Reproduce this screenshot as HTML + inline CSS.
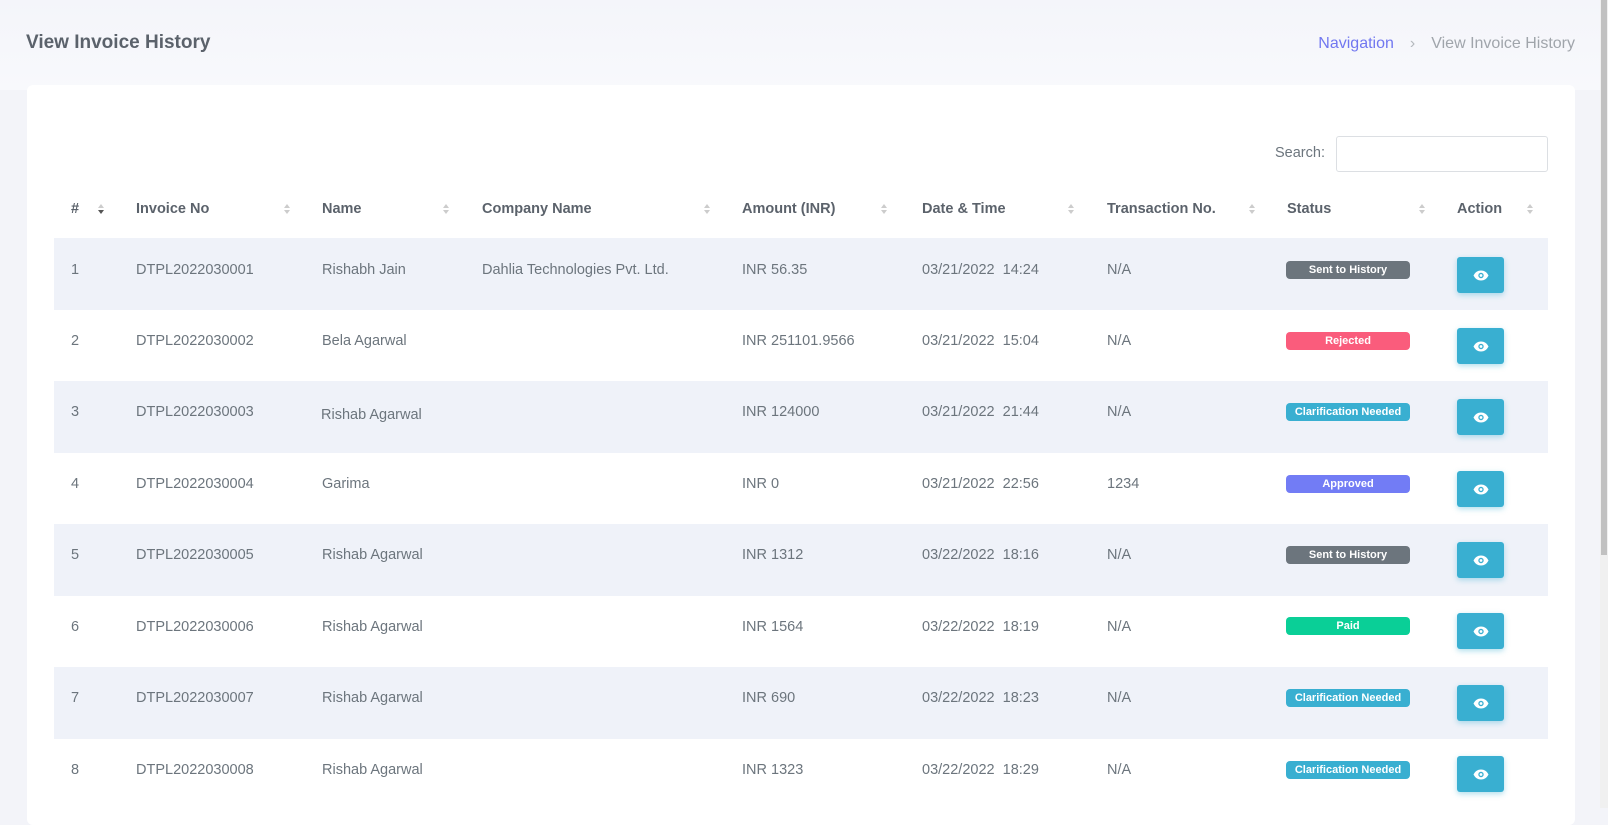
<!DOCTYPE html>
<html><head><meta charset="utf-8"><style>
*{box-sizing:border-box;margin:0;padding:0}
body{width:1608px;height:808px;overflow:hidden;background:#f3f4f9;font-family:"Liberation Sans",sans-serif;color:#6c757d;position:relative}
.top{position:absolute;left:0;top:0;width:1600px;height:90px;background:linear-gradient(#f4f5fa,#f8f9fc)}
h1{position:absolute;left:26px;top:32px;font-size:19px;font-weight:bold;color:#5b626b}
.bc{position:absolute;right:33px;top:35px;font-size:16px;color:#a0a5ab;white-space:nowrap}
.bc a{color:#7177f0;text-decoration:none}
.bc .sep{margin:0 16px 0 16px;color:#b4b8bd}
.card{position:absolute;left:27px;top:85px;width:1548px;height:740px;background:#fff;border-radius:6px}
.search{position:absolute;left:1275px;top:145px;font-size:14.5px;color:#6c757d}
.inp{position:absolute;left:1336px;top:136px;width:212px;height:36px;border:1px solid #dcdfe3;border-radius:3px;background:#fff}
.th{position:absolute;top:201px;font-size:14.5px;font-weight:bold;color:#5b626b}
.sort{position:absolute;top:203px;width:8px;height:12px}
.row{position:absolute;left:54px;width:1494px;height:71.5px}
.row.alt{background:#eff2f9}
.td{position:absolute;font-size:14.5px;color:#6c757d;margin-top:2px}
.badge{position:absolute;left:1286px;width:124px;height:18px;border-radius:4px;color:#fff;font-size:11px;font-weight:bold;text-align:center;line-height:18px}
.btn{position:absolute;left:1457px;width:47px;height:36px;background:#39afd1;border-radius:3px;box-shadow:0 2px 6px rgba(57,175,209,.4);display:flex;align-items:center;justify-content:center}
.sb{position:absolute;left:1600px;top:0;width:8px;height:808px;background:#f0f0f0}
.sb div{position:absolute;left:1px;top:0;width:6px;height:555px;background:#c1c1c1}
</style></head><body>
<div class="top"></div>
<h1>View Invoice History</h1>
<div class="bc"><a>Navigation</a><span class="sep">&#8250;</span>View Invoice History</div>
<div class="card"></div>
<div class="search">Search:</div><div class="inp"></div>
<div class="th" style="left:71px">#</div>
<div class="th" style="left:136px">Invoice No</div>
<div class="th" style="left:322px">Name</div>
<div class="th" style="left:482px">Company Name</div>
<div class="th" style="left:742px">Amount (INR)</div>
<div class="th" style="left:922px">Date &amp; Time</div>
<div class="th" style="left:1107px">Transaction No.</div>
<div class="th" style="left:1287px">Status</div>
<div class="th" style="left:1457px">Action</div>
<svg class="sort" style="left:97px" viewBox="0 0 8 12"><path d="M4 1L7 5H1Z" fill="#ccc"/><path d="M4 11L7 7H1Z" fill="#555"/></svg>
<svg class="sort" style="left:283px" viewBox="0 0 8 12"><path d="M4 1L7 5H1Z M4 11L7 7H1Z" fill="#ccc"/></svg>
<svg class="sort" style="left:442px" viewBox="0 0 8 12"><path d="M4 1L7 5H1Z M4 11L7 7H1Z" fill="#ccc"/></svg>
<svg class="sort" style="left:703px" viewBox="0 0 8 12"><path d="M4 1L7 5H1Z M4 11L7 7H1Z" fill="#ccc"/></svg>
<svg class="sort" style="left:880px" viewBox="0 0 8 12"><path d="M4 1L7 5H1Z M4 11L7 7H1Z" fill="#ccc"/></svg>
<svg class="sort" style="left:1067px" viewBox="0 0 8 12"><path d="M4 1L7 5H1Z M4 11L7 7H1Z" fill="#ccc"/></svg>
<svg class="sort" style="left:1248px" viewBox="0 0 8 12"><path d="M4 1L7 5H1Z M4 11L7 7H1Z" fill="#ccc"/></svg>
<svg class="sort" style="left:1418px" viewBox="0 0 8 12"><path d="M4 1L7 5H1Z M4 11L7 7H1Z" fill="#ccc"/></svg>
<svg class="sort" style="left:1526px" viewBox="0 0 8 12"><path d="M4 1L7 5H1Z M4 11L7 7H1Z" fill="#ccc"/></svg>

<div class="row alt" style="top:238px"></div>
<div class="row" style="top:309.5px"></div>
<div class="row alt" style="top:381px"></div>
<div class="row" style="top:452.5px"></div>
<div class="row alt" style="top:524px"></div>
<div class="row" style="top:595.5px"></div>
<div class="row alt" style="top:667px"></div>
<div class="row" style="top:738.5px"></div>

<div class="td" style="left:71px;top:260px">1</div><div class="td" style="left:136px;top:260px">DTPL2022030001</div><div class="td" style="left:322px;top:260px">Rishabh Jain</div><div class="td" style="left:482px;top:260px">Dahlia Technologies Pvt. Ltd.</div><div class="td" style="left:742px;top:260px">INR 56.35</div><div class="td" style="left:922px;top:260px">03/21/2022&nbsp; 14:24</div><div class="td" style="left:1107px;top:260px">N/A</div>
<div class="badge" style="top:261px;background:#6c757d">Sent to History</div>

<div class="td" style="left:71px;top:331px">2</div><div class="td" style="left:136px;top:331px">DTPL2022030002</div><div class="td" style="left:322px;top:331px">Bela Agarwal</div><div class="td" style="left:742px;top:331px">INR 251101.9566</div><div class="td" style="left:922px;top:331px">03/21/2022&nbsp; 15:04</div><div class="td" style="left:1107px;top:331px">N/A</div>
<div class="badge" style="top:332px;background:#fa5c7c">Rejected</div>

<div class="td" style="left:71px;top:402px">3</div><div class="td" style="left:136px;top:402px">DTPL2022030003</div><div class="td" style="left:321px;top:405px">Rishab Agarwal</div><div class="td" style="left:742px;top:402px">INR 124000</div><div class="td" style="left:922px;top:402px">03/21/2022&nbsp; 21:44</div><div class="td" style="left:1107px;top:402px">N/A</div>
<div class="badge" style="top:403px;background:#39afd1">Clarification Needed</div>

<div class="td" style="left:71px;top:474px">4</div><div class="td" style="left:136px;top:474px">DTPL2022030004</div><div class="td" style="left:322px;top:474px">Garima</div><div class="td" style="left:742px;top:474px">INR 0</div><div class="td" style="left:922px;top:474px">03/21/2022&nbsp; 22:56</div><div class="td" style="left:1107px;top:474px">1234</div>
<div class="badge" style="top:475px;background:#727cf5">Approved</div>

<div class="td" style="left:71px;top:545px">5</div><div class="td" style="left:136px;top:545px">DTPL2022030005</div><div class="td" style="left:322px;top:545px">Rishab Agarwal</div><div class="td" style="left:742px;top:545px">INR 1312</div><div class="td" style="left:922px;top:545px">03/22/2022&nbsp; 18:16</div><div class="td" style="left:1107px;top:545px">N/A</div>
<div class="badge" style="top:546px;background:#6c757d">Sent to History</div>

<div class="td" style="left:71px;top:617px">6</div><div class="td" style="left:136px;top:617px">DTPL2022030006</div><div class="td" style="left:322px;top:617px">Rishab Agarwal</div><div class="td" style="left:742px;top:617px">INR 1564</div><div class="td" style="left:922px;top:617px">03/22/2022&nbsp; 18:19</div><div class="td" style="left:1107px;top:617px">N/A</div>
<div class="badge" style="top:617px;background:#0acf97">Paid</div>

<div class="td" style="left:71px;top:688px">7</div><div class="td" style="left:136px;top:688px">DTPL2022030007</div><div class="td" style="left:322px;top:688px">Rishab Agarwal</div><div class="td" style="left:742px;top:688px">INR 690</div><div class="td" style="left:922px;top:688px">03/22/2022&nbsp; 18:23</div><div class="td" style="left:1107px;top:688px">N/A</div>
<div class="badge" style="top:689px;background:#39afd1">Clarification Needed</div>

<div class="td" style="left:71px;top:760px">8</div><div class="td" style="left:136px;top:760px">DTPL2022030008</div><div class="td" style="left:322px;top:760px">Rishab Agarwal</div><div class="td" style="left:742px;top:760px">INR 1323</div><div class="td" style="left:922px;top:760px">03/22/2022&nbsp; 18:29</div><div class="td" style="left:1107px;top:760px">N/A</div>
<div class="badge" style="top:761px;background:#39afd1">Clarification Needed</div>

<div class="btn" style="top:257px"><svg width="16" height="11" viewBox="0 0 16 11"><path d="M0.5 5.5C2.5 1.8 5 0.5 8 0.5s5.5 1.3 7.5 5c-2 3.7-4.5 5-7.5 5S2.5 9.2 0.5 5.5Z" fill="#fff"/><circle cx="8" cy="5.5" r="2.7" fill="#39afd1"/><circle cx="8" cy="5.5" r="1.4" fill="#fff"/></svg></div>
<div class="btn" style="top:328px"><svg width="16" height="11" viewBox="0 0 16 11"><path d="M0.5 5.5C2.5 1.8 5 0.5 8 0.5s5.5 1.3 7.5 5c-2 3.7-4.5 5-7.5 5S2.5 9.2 0.5 5.5Z" fill="#fff"/><circle cx="8" cy="5.5" r="2.7" fill="#39afd1"/><circle cx="8" cy="5.5" r="1.4" fill="#fff"/></svg></div>
<div class="btn" style="top:399px"><svg width="16" height="11" viewBox="0 0 16 11"><path d="M0.5 5.5C2.5 1.8 5 0.5 8 0.5s5.5 1.3 7.5 5c-2 3.7-4.5 5-7.5 5S2.5 9.2 0.5 5.5Z" fill="#fff"/><circle cx="8" cy="5.5" r="2.7" fill="#39afd1"/><circle cx="8" cy="5.5" r="1.4" fill="#fff"/></svg></div>
<div class="btn" style="top:471px"><svg width="16" height="11" viewBox="0 0 16 11"><path d="M0.5 5.5C2.5 1.8 5 0.5 8 0.5s5.5 1.3 7.5 5c-2 3.7-4.5 5-7.5 5S2.5 9.2 0.5 5.5Z" fill="#fff"/><circle cx="8" cy="5.5" r="2.7" fill="#39afd1"/><circle cx="8" cy="5.5" r="1.4" fill="#fff"/></svg></div>
<div class="btn" style="top:542px"><svg width="16" height="11" viewBox="0 0 16 11"><path d="M0.5 5.5C2.5 1.8 5 0.5 8 0.5s5.5 1.3 7.5 5c-2 3.7-4.5 5-7.5 5S2.5 9.2 0.5 5.5Z" fill="#fff"/><circle cx="8" cy="5.5" r="2.7" fill="#39afd1"/><circle cx="8" cy="5.5" r="1.4" fill="#fff"/></svg></div>
<div class="btn" style="top:613px"><svg width="16" height="11" viewBox="0 0 16 11"><path d="M0.5 5.5C2.5 1.8 5 0.5 8 0.5s5.5 1.3 7.5 5c-2 3.7-4.5 5-7.5 5S2.5 9.2 0.5 5.5Z" fill="#fff"/><circle cx="8" cy="5.5" r="2.7" fill="#39afd1"/><circle cx="8" cy="5.5" r="1.4" fill="#fff"/></svg></div>
<div class="btn" style="top:685px"><svg width="16" height="11" viewBox="0 0 16 11"><path d="M0.5 5.5C2.5 1.8 5 0.5 8 0.5s5.5 1.3 7.5 5c-2 3.7-4.5 5-7.5 5S2.5 9.2 0.5 5.5Z" fill="#fff"/><circle cx="8" cy="5.5" r="2.7" fill="#39afd1"/><circle cx="8" cy="5.5" r="1.4" fill="#fff"/></svg></div>
<div class="btn" style="top:756px"><svg width="16" height="11" viewBox="0 0 16 11"><path d="M0.5 5.5C2.5 1.8 5 0.5 8 0.5s5.5 1.3 7.5 5c-2 3.7-4.5 5-7.5 5S2.5 9.2 0.5 5.5Z" fill="#fff"/><circle cx="8" cy="5.5" r="2.7" fill="#39afd1"/><circle cx="8" cy="5.5" r="1.4" fill="#fff"/></svg></div>
<div class="sb"><div></div></div>
</body></html>
